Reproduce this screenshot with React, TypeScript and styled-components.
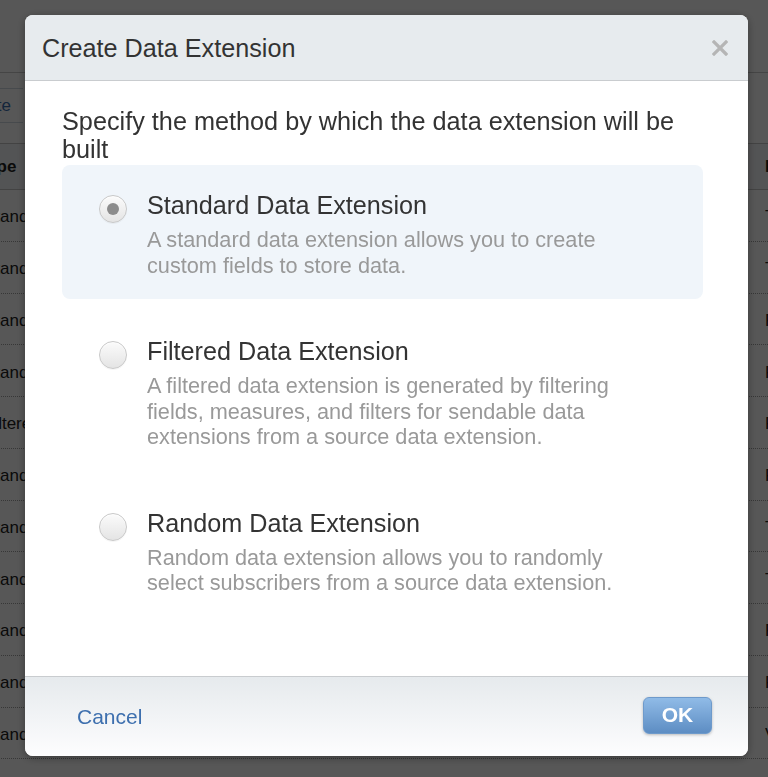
import React, { useState } from 'react';
import styled, { createGlobalStyle } from 'styled-components';

const GlobalStyle = createGlobalStyle`
  html, body {
    margin: 0;
    padding: 0;
    background: #ffffff;
    font-family: "Liberation Sans", Arial, Helvetica, sans-serif;
    color: #222;
  }
  * {
    box-sizing: border-box;
  }
`;

// page behind the dialog
const Page = styled.div`
  height: 777px;
  overflow: hidden;
`;

const TopBar = styled.div`
  height: 73px;
  border-bottom: 1px solid #c9c9c9;
`;

const Toolbar = styled.div`
  padding: 15px 0 0;
  margin-left: -40px;
`;

const ToolButton = styled.div`
  display: inline-flex;
  align-items: center;
  height: 35px;
  padding: 0 12px 0 0;
  border-top: 1px solid #cfd8e0;
  border-bottom: 1px solid #cfd8e0;
  font-size: 17px;
  color: #3d6fae;
`;

const Table = styled.div`
  margin-top: 20px;
  margin-left: -16px;
  font-size: 17px;
`;

const TableRow = styled.div<{ $head?: boolean }>`
  display: grid;
  grid-template-columns: ${(p) => (p.$head ? '787px' : '781px')} 1fr;
  align-items: center;
  height: ${(p) => (p.$head ? '47px' : '51.75px')};
  margin-left: ${(p) => (p.$head ? '-6px' : '0')};
  padding-top: ${(p) => (p.$head ? '0' : '4px')};
  border-top: ${(p) => (p.$head ? '1px solid #c4c4c4' : 'none')};
  border-bottom: ${(p) => (p.$head ? '1px solid #c4c4c4' : '1px dotted #a0a0a0')};
  font-weight: ${(p) => (p.$head ? 700 : 400)};
  background: ${(p) => (p.$head ? '#f4f6f8' : 'transparent')};
  white-space: nowrap;
`;

const Cell = styled.div`
  overflow: hidden;
`;

// dialog
const Overlay = styled.div`
  position: fixed;
  inset: 0;
  background: rgba(0, 0, 0, 0.66);
  padding: 15px 20px 21px 25px;
  display: flex;
`;

const Dialog = styled.div`
  flex: 1;
  display: flex;
  flex-direction: column;
  background: #ffffff;
  border-radius: 8px;
  overflow: hidden;
  box-shadow: 0 2px 8px rgba(0, 0, 0, 0.35);
`;

const Header = styled.div`
  height: 66px;
  flex: none;
  display: flex;
  align-items: center;
  justify-content: space-between;
  padding: 0 17px 0 17px;
  background: #e7ebee;
  border-bottom: 1px solid #c9cccf;
`;

const Title = styled.h2`
  margin: 0;
  font-size: 25.2px;
  font-weight: 400;
  color: #333;
  line-height: 30px;
`;

const CloseButton = styled.button`
  border: none;
  background: none;
  padding: 0;
  width: 22px;
  height: 22px;
  display: flex;
  align-items: center;
  justify-content: center;
  cursor: pointer;
`;

const Body = styled.div`
  flex: 1;
  padding: 26px 45px 0 37px;
`;

const Intro = styled.p`
  margin: 0 0 2px;
  font-size: 25.25px;
  line-height: 28px;
  color: #333;
`;

const OptionList = styled.div`
  display: grid;
  gap: 12px;
`;

const Option = styled.label<{ $selected: boolean }>`
  display: flex;
  gap: 20px;
  padding: 25px 20px 21px 37px;
  border-radius: 8px;
  background: ${(p) => (p.$selected ? '#f0f5fa' : 'transparent')};
  cursor: pointer;
`;

const Radio = styled.span<{ $checked: boolean }>`
  flex: none;
  width: 28px;
  height: 28px;
  margin-top: 5px;
  border-radius: 50%;
  border: 1px solid #c8c8c8;
  background: linear-gradient(#fbfbfb, #e4e4e4);
  box-shadow: inset 0 1px 1px rgba(255, 255, 255, 0.9), 0 1px 0 rgba(0, 0, 0, 0.04);
  display: flex;
  align-items: center;
  justify-content: center;

  &::after {
    content: '';
    width: 12px;
    height: 12px;
    border-radius: 50%;
    background: ${(p) => (p.$checked ? '#8c8c8c' : 'transparent')};
  }
`;

const OptionText = styled.div`
  display: grid;
  gap: 7px;
`;

const OptionTitle = styled.div`
  font-size: 25.2px;
  line-height: 30px;
  color: #333;
`;

const OptionDesc = styled.div`
  font-size: 21.7px;
  line-height: 25.5px;
  color: #999;
  max-width: 485px;
`;

const Footer = styled.div`
  height: 80px;
  flex: none;
  display: flex;
  align-items: center;
  justify-content: space-between;
  padding: 0 36px 0 52px;
  border-top: 1px solid #c9cccf;
  background: linear-gradient(#e6eaed, #fdfdfe);
`;

const CancelLink = styled.a`
  font-size: 21px;
  color: #3d6fae;
  text-decoration: none;
  margin-top: 1px;
  cursor: pointer;
`;

const OkButton = styled.button`
  width: 69px;
  height: 37px;
  margin-bottom: 3px;
  border: 1px solid #6e9acb;
  border-radius: 6px;
  background: linear-gradient(#90bbe7, #5d8dc3);
  box-shadow: 0 1px 3px rgba(0, 0, 0, 0.25);
  color: #fff;
  font-family: inherit;
  font-size: 21px;
  font-weight: 700;
  cursor: pointer;
`;

const typeRows = [
  ['Standard', 'Text'],
  ['Standard', 'Text'],
  ['Standard', 'False'],
  ['Standard', 'False'],
  ['Filtered', 'False'],
  ['Standard', 'False'],
  ['Standard', 'Text'],
  ['Standard', 'Text'],
  ['Standard', 'False'],
  ['Standard', 'False'],
  ['Standard', 'Varies'],
  ['Standard', 'False'],
];

const options = [
  {
    key: 'standard',
    title: 'Standard Data Extension',
    desc: 'A standard data extension allows you to create custom fields to store data.',
  },
  {
    key: 'filtered',
    title: 'Filtered Data Extension',
    desc: 'A filtered data extension is generated by filtering fields, measures, and filters for sendable data extensions from a source data extension.',
  },
  {
    key: 'random',
    title: 'Random Data Extension',
    desc: 'Random data extension allows you to randomly select subscribers from a source data extension.',
  },
];

const App: React.FC = () => {
  const [method, setMethod] = useState('standard');

  return (
    <>
      <GlobalStyle/>
      <Page>
        <TopBar/>
        <Toolbar>
          <ToolButton>Create</ToolButton>
        </Toolbar>
        <Table>
          <TableRow $head>
            <Cell>Type</Cell>
            <Cell>Is Sendable</Cell>
          </TableRow>
          {typeRows.map(([type, value], i) => (
            <TableRow key={i}>
              <Cell>{type}</Cell>
              <Cell>{value}</Cell>
            </TableRow>
          ))}
        </Table>
      </Page>

      <Overlay>
        <Dialog>
          <Header>
            <Title>Create Data Extension</Title>
            <CloseButton aria-label="Close">
              <svg width="16" height="16" viewBox="0 0 16 16">
                <path d="M2 2 L14 14 M14 2 L2 14" stroke="#b5b5b5" strokeWidth="3.2" strokeLinecap="square"/>
              </svg>
            </CloseButton>
          </Header>
          <Body>
            <Intro>Specify the method by which the data extension will be built</Intro>
            <OptionList>
              {options.map((opt) => (
                <Option
                  key={opt.key}
                  $selected={method === opt.key}
                  onClick={() => setMethod(opt.key)}
                >
                  <Radio $checked={method === opt.key}/>
                  <OptionText>
                    <OptionTitle>{opt.title}</OptionTitle>
                    <OptionDesc>{opt.desc}</OptionDesc>
                  </OptionText>
                </Option>
              ))}
            </OptionList>
          </Body>
          <Footer>
            <CancelLink>Cancel</CancelLink>
            <OkButton>OK</OkButton>
          </Footer>
        </Dialog>
      </Overlay>
    </>
  );
};

export default App;
